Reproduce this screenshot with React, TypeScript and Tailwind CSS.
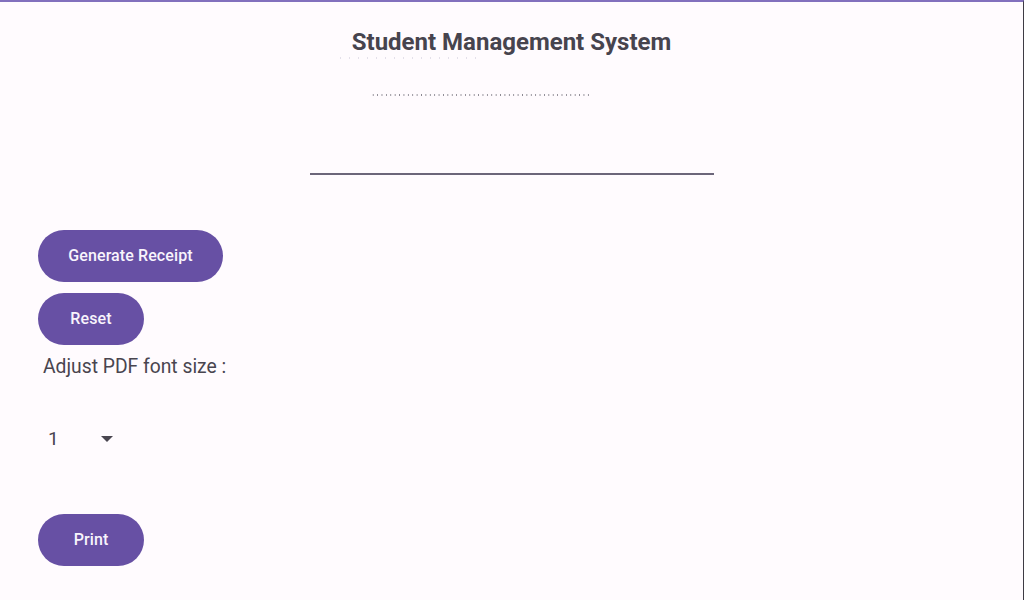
import React from 'react';

const font = { fontFamily: 'Roboto, "Noto Sans", sans-serif' };

function PillButton({ label, className }: { label: string; className?: string }) {
  return (
    <button
      className={
        'h-[52px] rounded-full bg-[#6750a4] text-[#f8f4fc] text-[16px] font-medium tracking-[0.1px] flex items-center justify-center ' +
        (className ?? '')
      }
    >
      {label}
    </button>
  );
}

export default function App() {
  return (
    <div
      className="w-full h-[600px] bg-[#fffbfe] border-t-2 border-[#8270bd] border-r border-r-[#3e3b44] overflow-hidden flex flex-col"
      style={font}
    >
      {/* header */}
      <div className="flex flex-col items-center">
        <h1 className="mt-[26px] text-[24px] leading-[28px] font-bold text-[#47444e]">
          Student Management System
        </h1>
        <div className="w-[140px] h-[2px] -ml-[212px] mt-[1px] bg-[radial-gradient(circle,#e4e0ea_0.8px,transparent_1px)] bg-[length:9px_2px]" />
        <div className="w-[220px] h-[2px] mt-[35px] -ml-[62px] bg-[radial-gradient(circle,#8a8790_0.8px,transparent_1px)] bg-[length:4.4px_2px]" />
        <div className="w-[404px] h-[2px] mt-[77px] bg-[#6c667a]" />
      </div>

      {/* actions */}
      <div className="flex flex-col items-start pl-[38px]">
        <PillButton label="Generate Receipt" className="mt-[55px] w-[185px]" />
        <PillButton label="Reset" className="mt-[11px] w-[106px]" />
        <p className="mt-[10px] ml-[5px] text-[19.3px] leading-[24px] text-[#49454f]">Adjust PDF font size :</p>

        <div className="mt-[48px] ml-[10px] flex items-center h-[24px]">
          <span className="text-[19px] leading-[24px] text-[#49454f]">1</span>
          <svg className="ml-[42px]" width="12" height="6" viewBox="0 0 12 6">
            <path d="M0 0h12L6 6z" fill="#49454f" />
          </svg>
        </div>

        <PillButton label="Print" className="mt-[63px] w-[106px]" />
      </div>
    </div>
  );
}
